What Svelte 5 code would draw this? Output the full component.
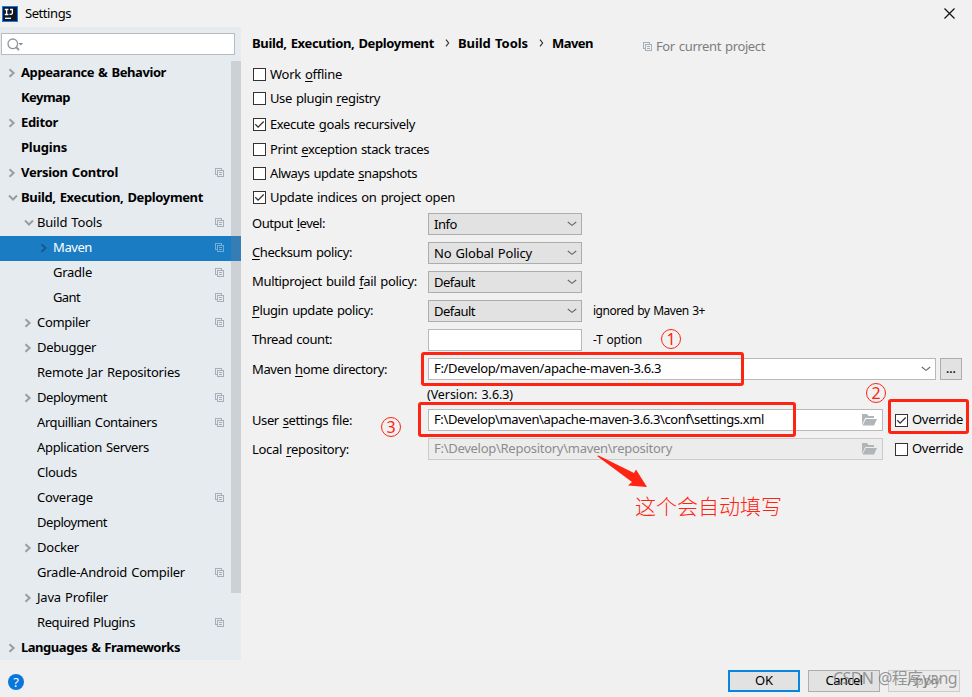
<script>
  const tree = [
    { t: 'Appearance & Behavior', w: 145, l: 0, a: 'r' },
    { t: 'Keymap', w: 49, l: 0 },
    { t: 'Editor', w: 37, l: 0, a: 'r' },
    { t: 'Plugins', w: 46, l: 0 },
    { t: 'Version Control', w: 97, l: 0, a: 'r', p: 1 },
    { t: 'Build, Execution, Deployment', w: 182, l: 0, a: 'd' },
    { t: 'Build Tools', w: 65, l: 1, a: 'd', p: 1 },
    { t: 'Maven', w: 39, l: 2, a: 'r', p: 1, sel: true },
    { t: 'Gradle', w: 39, l: 2, p: 1 },
    { t: 'Gant', w: 27, l: 2, p: 1 },
    { t: 'Compiler', w: 53, l: 1, a: 'r', p: 1 },
    { t: 'Debugger', w: 59, l: 1, a: 'r' },
    { t: 'Remote Jar Repositories', w: 143, l: 1, p: 1 },
    { t: 'Deployment', w: 70, l: 1, a: 'r', p: 1 },
    { t: 'Arquillian Containers', w: 120, l: 1, p: 1 },
    { t: 'Application Servers', w: 112, l: 1 },
    { t: 'Clouds', w: 40, l: 1 },
    { t: 'Coverage', w: 56, l: 1, p: 1 },
    { t: 'Deployment', w: 70, l: 1 },
    { t: 'Docker', w: 42, l: 1, a: 'r' },
    { t: 'Gradle-Android Compiler', w: 148, l: 1, p: 1 },
    { t: 'Java Profiler', w: 71, l: 1, a: 'r' },
    { t: 'Required Plugins', w: 98, l: 1, p: 1 },
    { t: 'Languages & Frameworks', w: 159, l: 0, a: 'r' }
  ];

  // [before mnemonic, mnemonic, after], label width, row height
  const checks = [
    { s: ['Work ', 'o', 'ffline'], w: 72, h: 24 },
    { s: ['Use plugin ', 'r', 'egistry'], w: 110, h: 26 },
    { s: ['Execute ', 'g', 'oals recursively'], w: 145, h: 25, on: true },
    { s: ['Print ', 'e', 'xception stack traces'], w: 159, h: 24 },
    { s: ['Always update ', 's', 'napshots'], w: 147, h: 24 },
    { s: ['Update indices on project open', '', ''], w: 185, h: 22, on: true }
  ];

  const combos = [
    { s: ['Output ', 'l', 'evel:'], w: 73, v: 'Info', vw: 23 },
    { s: ['', 'C', 'hecksum policy:'], w: 100, v: 'No Global Policy', vw: 98 },
    { s: ['Multiproject build ', 'f', 'ail policy:'], w: 165, v: 'Default', vw: 41 },
    { s: ['', 'P', 'lugin update policy:'], w: 121, v: 'Default', vw: 41, note: 'ignored by Maven 3+', nw: 112 }
  ];

  // Spreads the letters so that a label takes up its set width.
  function fit(node, width) {
    const natural = node.getBoundingClientRect().width;
    const n = node.textContent.length;
    node.style.letterSpacing = (width - natural) / n + 'px';
  }
</script>

{#snippet label(s, w)}<span class="txt" use:fit={w}>{s[0]}<u>{s[1]}</u>{s[2]}</span>{/snippet}

{#snippet copyIcon()}
  <svg class="copy" width="9" height="9" viewBox="0 0 9 9" fill="none" stroke="currentColor" shape-rendering="crispEdges">
    <path d="M2 6.5H.5V.5H6.5V2M2.5 2.5H8.5V8.5H2.5ZM4 4.5H7M4 6.5H7" />
  </svg>
{/snippet}

{#snippet box(on)}
  <span class="box">
    {#if on}<svg width="11" height="11" viewBox="0 0 11 11" fill="none" stroke="#333" stroke-width="1.3"><path d="M1.3 5.3L4.1 8.1L9.7 2.5" /></svg>{/if}
  </span>
{/snippet}

{#snippet chev()}
  <svg class="chev" width="10" height="6" viewBox="0 0 10 6" fill="none" stroke="#666" stroke-width="1.1"><path d="M.8 1L5 4.4L9.2 1" /></svg>
{/snippet}

{#snippet folder()}
  <svg class="folder" width="15" height="12" viewBox="0 0 15 12" fill="#afb5b8"><path d="M0 11V0H5L6.5 2H12V4H3.2Z" /><path d="M3.8 5H15L12 11.5H.6Z" /></svg>
{/snippet}

<div class="window">
  <header>
    <svg width="16" height="16" viewBox="0 0 16 16">
      <rect width="16" height="16" fill="#087cfa" /><rect x="1" y="1" width="14" height="14" fill="#111820" />
      <path d="M2.8 3.5H6.4M4.6 3.5V8.5M2.8 8.5H6.4M8 3.5H11M10.4 3V7Q10.4 8.6 7.5 8.3" fill="none" stroke="#fff" stroke-width="1.3" />
      <path d="M3 12.3H9" stroke="#fff" stroke-width="1.3" />
    </svg>
    <span class="title txt" use:fit={46}>Settings</span>
    <svg class="close" width="11" height="11" viewBox="0 0 11 11" stroke="#111" stroke-width="1.2"><path d="M.5 .5L10.5 10.5M10.5 .5L.5 10.5" /></svg>
  </header>

  <div class="body">
    <aside>
      <div class="search">
        <svg width="17" height="13" viewBox="0 0 17 13" fill="none" stroke="#8e979c" stroke-width="1.3"><circle cx="5.8" cy="5.8" r="4.8" /><path d="M9 9L12 12" stroke-width="1.8" /><path d="M11.5 5H16L13.75 7.5Z" fill="#7f8b91" stroke="none" /></svg>
      </div>
      <div class="tree">
        {#each tree as r}
          <div class="row l{r.l}" class:sel={r.sel}>
            <span class="arrow">
              {#if r.a === 'r'}
                <svg width="8" height="10" viewBox="0 0 8 10"><path d="M1.5 1.2L5.6 5L1.5 8.8" /></svg>
              {:else if r.a === 'd'}
                <svg width="10" height="8" viewBox="0 0 10 8"><path d="M1 1.5L5 5.5L9 1.5" /></svg>
              {/if}
            </span>
            <span class="txt" use:fit={r.w}>{r.t}</span>
            {#if r.p}{@render copyIcon()}{/if}
          </div>
        {/each}
        <div class="scroll"></div>
      </div>
    </aside>

    <main>
      <div class="crumbs">
        <b class="txt" use:fit={182}>Build, Execution, Deployment</b>
        <svg class="sep" width="5" height="8" viewBox="0 0 5 8"><path d="M1 .7L3.6 4L1 7.3" /></svg>
        <b class="txt" use:fit={70}>Build Tools</b>
        <svg class="sep" width="5" height="8" viewBox="0 0 5 8"><path d="M1 .7L3.6 4L1 7.3" /></svg>
        <b class="txt" use:fit={41}>Maven</b>
        <span class="project">{@render copyIcon()}<span class="txt" use:fit={109}>For current project</span></span>
      </div>

      <div class="checks">
        {#each checks as c}
          <div class="check" style:height="{c.h}px">{@render box(c.on)}{@render label(c.s, c.w)}</div>
        {/each}
      </div>

      <div class="form">
        {#each combos as c}
          <div class="field">
            <div class="name up">{@render label(c.s, c.w)}</div>
            <div class="combo"><span class="txt" use:fit={c.vw}>{c.v}</span>{@render chev()}</div>
            {#if c.note}<span class="note txt" use:fit={c.nw}>{c.note}</span>{/if}
          </div>
        {/each}
        <div class="field">
          <div class="name up">{@render label(['Thread count:', '', ''], 80)}</div>
          <div class="input short"></div>
          <span class="note txt" use:fit={49}>-T option</span>
        </div>
        <div class="field">
          <div class="name">{@render label(['Maven ', 'h', 'ome directory:'], 135)}</div>
          <div class="input home"><span class="txt" use:fit={227}>F:/Develop/maven/apache-maven-3.6.3</span>{@render chev()}</div>
          <div class="more">...</div>
        </div>
        <div class="version"><span class="txt" use:fit={86}>(Version: 3.6.3)</span></div>
        <div class="field">
          <div class="name">{@render label(['User ', 's', 'ettings file:'], 100)}</div>
          <div class="input path"><span class="txt" use:fit={330}>F:\Develop\maven\apache-maven-3.6.3\conf\settings.xml</span>{@render folder()}</div>
          <div class="override">{@render box(true)}<span class="txt" use:fit={51}>Override</span></div>
        </div>
        <div class="field">
          <div class="name">{@render label(['Local ', 'r', 'epository:'], 97)}</div>
          <div class="input path off"><span class="txt" use:fit={238}>F:\Develop\Repository\maven\repository</span>{@render folder()}</div>
          <div class="override">{@render box(false)}<span class="txt" use:fit={51}>Override</span></div>
        </div>
      </div>
    </main>
  </div>

  <footer>
    <span class="help">?</span>
    <div class="btn ok"><span class="txt" use:fit={18}>OK</span></div>
    <div class="btn"><span class="txt" use:fit={37}>Cancel</span></div>
    <div class="btn disabled"><span class="txt" use:fit={32}>Apply</span></div>
  </footer>

  <div class="mark m1"></div>
  <div class="mark m2"></div>
  <div class="mark m3"></div>
  <span class="num n1">1</span>
  <span class="num n2">2</span>
  <span class="num n3">3</span>
  <svg class="pointer" width="54" height="34" viewBox="0 0 54 34" fill="#ff2412"><path d="M1 1L2.5 .5L38 18L40 14.5L51 32L32 30.5L36 27Z" /></svg>
  <span class="hint">这个会自动填写</span>
  <span class="watermark txt" use:fit={124}>CSDN @程序yang</span>
</div>

<style>
  :global(body) { background: #f1f1f1; }
  .window {
    position: relative; width: 972px; height: 697px; overflow: hidden;
    display: flex; flex-direction: column; background: #f1f1f1; color: #000;
    font: 13px/18px 'Noto Sans', 'Noto Sans CJK SC', sans-serif;
  }
  .txt { white-space: pre; flex: none; word-spacing: 1px; }
  u { text-decoration-thickness: 1px; text-underline-offset: 2px; }
  svg { display: block; flex: none; }
  header { height: 27px; display: flex; align-items: center; padding: 0 17px 0 2px; box-sizing: border-box; }
  .title { margin: -2px 0 0 7px; }
  .close { margin: -1px 0 0 auto; }
  .body { display: flex; height: 633px; }
  aside { width: 241px; background: #e6ebef; overflow: hidden; }
  .search {
    box-sizing: border-box; width: 234px; height: 22px; margin: 6px 0 6px 1px; padding-left: 5px;
    border: 1px solid #b7bcc0; background: #fff; display: flex; align-items: center;
  }
  .tree { position: relative; }
  .row { display: flex; align-items: center; height: 25px; padding: 0 17px 2px 0; box-sizing: border-box; }
  .row .txt { margin-top: -2px; }
  .row.l0 { font-weight: 700; padding-left: 6px; }
  .row.l1 { padding-left: 22px; }
  .row.l2 { padding-left: 38px; }
  .arrow { width: 15px; display: flex; padding-left: 2px; box-sizing: border-box; }
  .arrow path { fill: none; stroke: #9a9da0; stroke-width: 2; }
  .row .copy { margin-left: auto; }
  .copy { color: #a5afb7; }
  .sel { background: #1a7dc4; color: #fff; }
  .sel .arrow path { stroke: #165a8c; }
  .sel .copy { color: #76add6; }
  .scroll { position: absolute; right: 0; top: 0; width: 10px; height: 532px; background: rgba(130, 130, 135, .25); }
  main { flex: 1; padding-left: 11px; }
  .crumbs { display: flex; align-items: center; height: 18px; margin-top: 7px; }
  .sep { margin: 0 9px 0 11px; }
  .sep path { fill: none; stroke: #333; stroke-width: 1.2; }
  .sep + b { margin-left: -1px; }
  .project { display: flex; align-items: center; gap: 4px; margin: 6px 0 0 50px; color: #7d7d7d; }
  .checks { margin-top: 16px; height: 145px; }
  .check { display: flex; align-items: flex-start; gap: 4px; padding-left: 1px; }
  .check .txt { margin-top: -3px; }
  .box { box-sizing: border-box; width: 13px; height: 13px; border: 1px solid #333; background: #fff; flex: none; }
  .form { display: flex; flex-direction: column; gap: 7px; }
  .field { display: flex; align-items: center; height: 22px; }
  .name { width: 176px; flex: none; display: flex; }
  .up { margin-top: -2px; }
  .combo, .input {
    box-sizing: border-box; width: 154px; height: 22px; border: 1px solid #adadad; background: #e2e2e2;
    display: flex; align-items: center; justify-content: space-between; padding: 0 4px 0 5px;
  }
  .input { background: #fff; border-color: #b9b9b9; }
  .input > .txt { margin-top: -2px; }
  .home { width: 508px; }
  .path { width: 455px; padding-right: 5px; }
  .off { background: #ececec; border-color: #cbcbcb; color: #8c8c8c; }
  .note { margin-left: 11px; font-size: 12px; }
  .more {
    box-sizing: border-box; width: 22px; height: 22px; margin-left: 4px; border: 1px solid #adadad;
    background: #e2e2e2; text-align: center; line-height: 19px; font-weight: 500; font-size: 12px;
  }
  .version { height: 15px; line-height: 15px; padding-left: 175px; font-size: 12.5px; }
  .override { display: flex; align-items: center; gap: 4px; margin-left: 12px; }
  .override .txt { margin-top: -2px; }
  footer { height: 37px; display: flex; align-items: center; padding: 5px 12px 0 8px; gap: 8px; box-sizing: border-box; background: #f0f0f0; }
  .help { width: 16px; height: 16px; border-radius: 50%; background: #0877dc; color: #fff; text-align: center; line-height: 16px; font-size: 13px; margin: 2px auto 0 0; }
  .btn { box-sizing: border-box; width: 72px; height: 22px; border: 1px solid #adadad; background: #e2e2e2; display: flex; align-items: center; justify-content: center; }
  .btn .txt { margin-top: -2px; }
  .ok { border: 2px solid #0885de; }
  .disabled { border-color: #cdcdcd; background: #ebebeb; color: #a0a0a0; }
  .mark { position: absolute; box-sizing: border-box; border: 3px solid #ff2412; border-radius: 3px; }
  .m1 { left: 421px; top: 352px; width: 323px; height: 34px; }
  .m2 { left: 418px; top: 402px; width: 378px; height: 35px; }
  .m3 { left: 888px; top: 399px; width: 81px; height: 35px; }
  .num {
    position: absolute; box-sizing: border-box; width: 20px; height: 20px; border: 1px solid #ff2412; border-radius: 50%;
    color: #ff2412; text-align: center; font-size: 16px; line-height: 18px;
  }
  .n1 { left: 661px; top: 329px; }
  .n2 { left: 866px; top: 383px; }
  .n3 { left: 381px; top: 417px; }
  .pointer { position: absolute; left: 596px; top: 455px; }
  .hint { position: absolute; left: 635px; top: 490px; color: #ff2412; font: 300 21px/30px 'Noto Sans CJK SC', sans-serif; white-space: nowrap; }
  .watermark { position: absolute; left: 833px; top: 667px; color: rgba(110, 110, 110, .7); font-size: 16px; line-height: 22px; }
</style>
